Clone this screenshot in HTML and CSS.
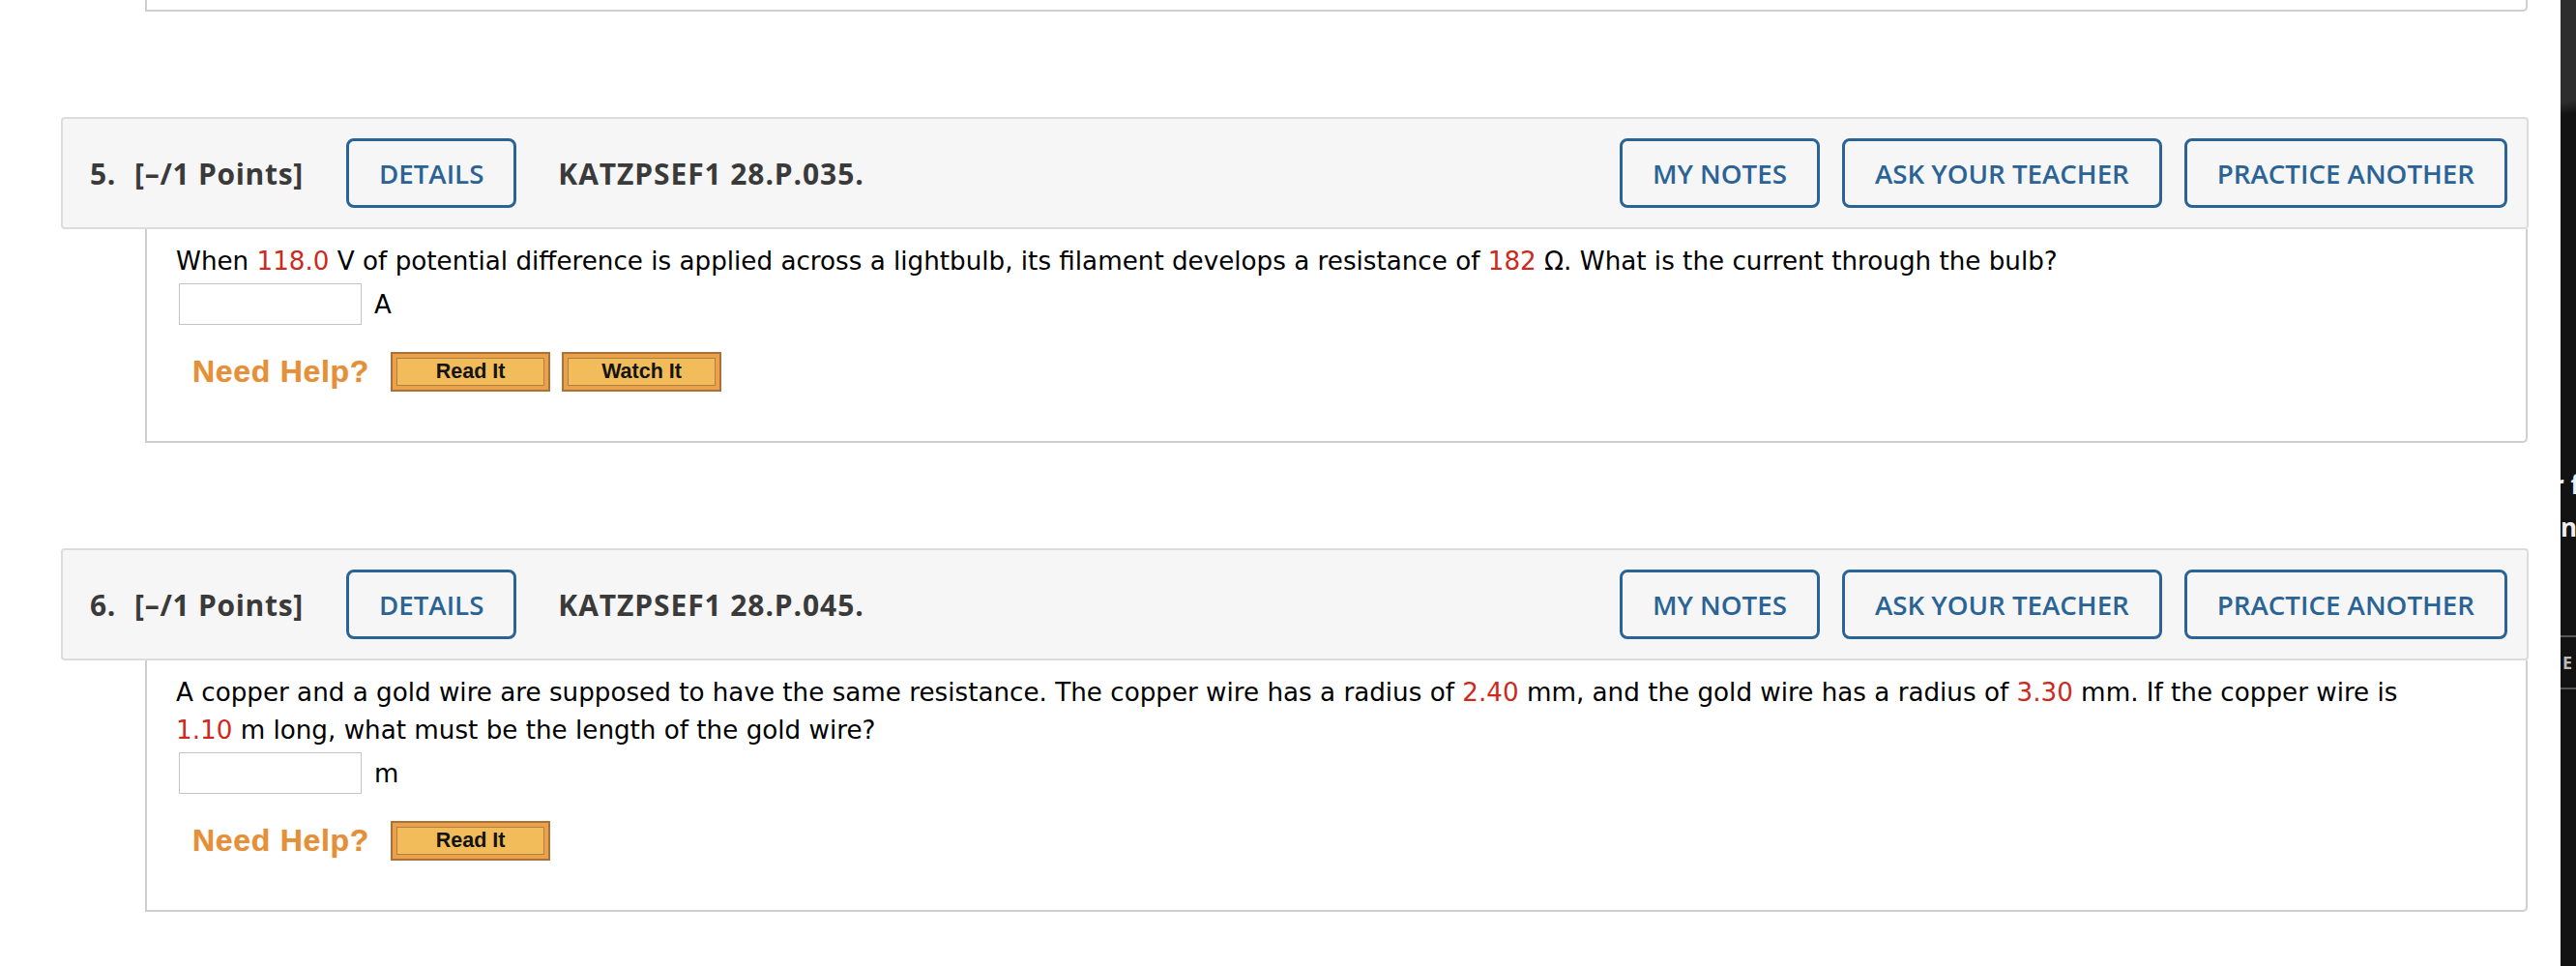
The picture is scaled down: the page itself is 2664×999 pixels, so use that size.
FILE: index.html
```html
<!DOCTYPE html>
<html lang="en">
<head>
  <meta charset="UTF-8">
  <title>Assignment</title>
  <link rel="stylesheet" href="styles.css">
</head>
<body>
<div class="page">
  <main class="questions">
    <div class="qbody qbody-tail"></div>

    <section class="question">
      <header class="qhead">
        <span class="qnum">5.</span>
        <span class="qpoints">[–/1 Points]</span>
        <button class="qbtn">DETAILS</button>
        <span class="qref">KATZPSEF1 28.P.035.</span>
        <div class="qtools">
          <button class="qbtn">MY NOTES</button>
          <button class="qbtn">ASK YOUR TEACHER</button>
          <button class="qbtn">PRACTICE ANOTHER</button>
        </div>
      </header>
      <div class="qbody">
        <p class="qtext">When <span class="val">118.0</span> V of potential difference is applied across a lightbulb, its filament develops a resistance of <span class="val">182</span> Ω. What is the current through the bulb?</p>
        <div class="answer">
          <input type="text" class="ans">
          <span class="unit">A</span>
        </div>
        <div class="help">
          <span class="help-label">Need Help?</span>
          <button class="hbtn">Read It</button>
          <button class="hbtn">Watch It</button>
        </div>
      </div>
    </section>

    <section class="question">
      <header class="qhead">
        <span class="qnum">6.</span>
        <span class="qpoints">[–/1 Points]</span>
        <button class="qbtn">DETAILS</button>
        <span class="qref">KATZPSEF1 28.P.045.</span>
        <div class="qtools">
          <button class="qbtn">MY NOTES</button>
          <button class="qbtn">ASK YOUR TEACHER</button>
          <button class="qbtn">PRACTICE ANOTHER</button>
        </div>
      </header>
      <div class="qbody">
        <p class="qtext">A copper and a gold wire are supposed to have the same resistance. The copper wire has a radius of <span class="val">2.40</span> mm, and the gold wire has a radius of <span class="val">3.30</span> mm. If the copper wire is <span class="val">1.10</span> m long, what must be the length of the gold wire?</p>
        <div class="answer">
          <input type="text" class="ans">
          <span class="unit">m</span>
        </div>
        <div class="help">
          <span class="help-label">Need Help?</span>
          <button class="hbtn">Read It</button>
        </div>
      </div>
    </section>
  </main>

  <aside class="dock">
    <p class="dock-h">r f</p>
    <p class="dock-h dock-h2">n:</p>
    <div class="dock-tab">E</div>
  </aside>
</div>
</body>
</html>
```

FILE: styles.css
```css
body {
  margin: 0;
  background: #fff;
  color: #000;
  font-family: "DejaVu Sans", Verdana, sans-serif;
}

.page {
  display: flex;
  min-height: 100vh;
}

/* question list */

.questions {
  flex: 1;
  padding: 0 33px 0 63px;
}

.question {
  margin-top: 109px;
}

.qhead {
  display: flex;
  align-items: center;
  background: #f6f6f6;
  border: 2px solid #dcdcdc;
  border-radius: 4px;
  padding: 20px 20px 20px 28px;
  font-family: "Open Sans", sans-serif;
  font-size: 30px;
  color: #3a3a3a;
}

.qnum,
.qpoints,
.qref {
  font-weight: 700;
  letter-spacing: 0.7px;
}

.qnum {
  margin-right: 19px;
}

.qpoints {
  margin-right: 44px;
}

.qref {
  margin-left: 43px;
  letter-spacing: 0.9px;
}

.qtools {
  display: flex;
  gap: 23px;
  margin-left: auto;
}

.qbtn {
  height: 72px;
  padding: 0 31px;
  background: transparent;
  border: 3px solid #2a6395;
  border-radius: 8px;
  color: #2a6395;
  font-family: "Open Sans", sans-serif;
  font-size: 27.7px;
  font-weight: 600;
  cursor: pointer;
}

.qbody {
  margin-left: 87px;
  margin-right: 1px;
  border: 2px solid #cfcfcf;
  border-top: none;
  border-radius: 0 0 5px 0;
  padding: 14px 92px 51px 30px;
}

.qbody-tail {
  height: 10px;
  padding: 0;
}

.qtext {
  margin: 0;
  font-size: 26.2px;
  line-height: 39px;
}

.val {
  color: #cc2a1e;
}

.answer {
  display: flex;
  align-items: center;
  margin-top: 3px;
}

.ans {
  box-sizing: border-box;
  width: 189px;
  height: 43px;
  margin: 0 13px 0 3px;
  border: 1px solid #c4c4c4;
}

.unit {
  font-size: 26px;
}

/* need help */

.help {
  display: flex;
  align-items: center;
  gap: 12px;
  margin: 28px 0 0 17px;
}

.help-label {
  margin-right: 10px;
  font-family: "Liberation Sans", Arial, sans-serif;
  font-size: 32px;
  font-weight: 700;
  letter-spacing: 0.7px;
  color: #e4903a;
  text-shadow: 0 0 1px rgba(228, 144, 58, 0.6);
}

.hbtn {
  width: 165px;
  height: 41px;
  padding: 0;
  border: 2px solid #a87339;
  background: #f2bc5a;
  box-shadow: inset 0 0 0 4px #eba049, inset 0 0 0 5px #a9824a;
  font-family: "Liberation Sans", Arial, sans-serif;
  font-size: 21.5px;
  font-weight: 700;
  color: #141414;
  cursor: pointer;
}

/* side panel peeking in at the right */

.dock {
  width: 16px;
  overflow: hidden;
  background: linear-gradient(172deg, #2d2d2d 0, #2d2d2d 105px, #121212 118px);
  color: #eee;
  font-family: "Open Sans", sans-serif;
  white-space: nowrap;
}

.dock-h {
  margin: 484px 0 0 -8px;
  font-size: 26px;
  font-weight: 700;
  line-height: 34px;
}

.dock-h2 {
  margin-top: 10px;
  margin-left: 0;
}

.dock-tab {
  margin-top: 95px;
  padding: 14px 0 14px 2px;
  border-top: 2px solid #555;
  border-bottom: 2px solid #555;
  color: #bbb;
  font-size: 18px;
  font-weight: 700;
}
```
